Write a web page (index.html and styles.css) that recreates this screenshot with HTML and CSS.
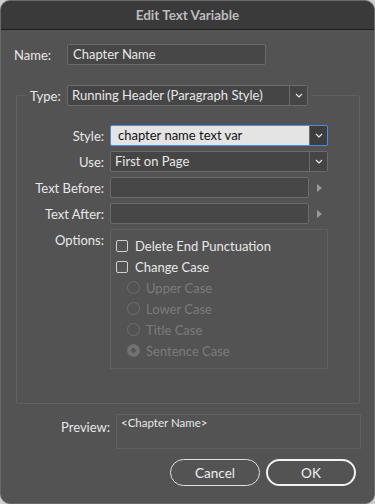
FILE: index.html
```html
<!DOCTYPE html>
<html lang="en">
  <head>
    <meta charset="UTF-8" />
    <title>Edit Text Variable</title>
    <link rel="stylesheet" href="styles.css">
  </head>
  <body>
    <div class="dialog">
      <div class="titlebar">Edit Text Variable</div>

      <div class="content">
        <div class="name_row">
          <span class="label">Name:</span>
          <div class="field name_field">Chapter Name</div>
        </div>

        <fieldset class="group">
          <legend class="type_legend">
            <span class="label">Type:</span>
            <div class="select type_select">
              <span class="select_text">Running Header (Paragraph Style)</span>
              <span class="select_arrow">
                <svg width="8" height="5" viewBox="0 0 8 5"><path d="M1 1l3 3 3-3" fill="none" stroke="#e6e6e6" stroke-width="1.2"/></svg>
              </span>
            </div>
          </legend>

          <div class="grid">
            <span class="label right">Style:</span>
            <div class="select style_select">
              <span class="select_text">chapter name text var</span>
              <span class="select_arrow">
                <svg width="8" height="5" viewBox="0 0 8 5"><path d="M1 1l3 3 3-3" fill="none" stroke="#e6e6e6" stroke-width="1.2"/></svg>
              </span>
            </div>

            <span class="label right">Use:</span>
            <div class="select">
              <span class="select_text">First on Page</span>
              <span class="select_arrow">
                <svg width="8" height="5" viewBox="0 0 8 5"><path d="M1 1l3 3 3-3" fill="none" stroke="#e6e6e6" stroke-width="1.2"/></svg>
              </span>
            </div>

            <span class="label right">Text Before:</span>
            <div class="with_menu">
              <div class="field text_field"></div>
              <svg class="menu_tri" width="5" height="8" viewBox="0 0 5 8"><path d="M0 0l5 4-5 4z" fill="#9a9a9a"/></svg>
            </div>

            <span class="label right">Text After:</span>
            <div class="with_menu">
              <div class="field text_field"></div>
              <svg class="menu_tri" width="5" height="8" viewBox="0 0 5 8"><path d="M0 0l5 4-5 4z" fill="#9a9a9a"/></svg>
            </div>

            <span class="label right options_label">Options:</span>
            <div class="options">
              <div class="check_row"><span class="checkbox"></span>Delete End Punctuation</div>
              <div class="check_row"><span class="checkbox"></span>Change Case</div>
              <div class="radio_row"><span class="radio"></span>Upper Case</div>
              <div class="radio_row"><span class="radio"></span>Lower Case</div>
              <div class="radio_row"><span class="radio"></span>Title Case</div>
              <div class="radio_row"><span class="radio checked"></span>Sentence Case</div>
            </div>
          </div>
        </fieldset>

        <div class="preview_row">
          <span class="label preview_label">Preview:</span>
          <div class="preview_box">&lt;Chapter Name&gt;</div>
        </div>

        <div class="buttons">
          <button class="btn">Cancel</button>
          <button class="btn btn_ok">OK</button>
        </div>
      </div>
    </div>
  </body>
</html>
```

FILE: styles.css
```css
html,
body {
  margin: 0;
  height: 100%;
}
body {
  background: #cfcfcf;
  font-family: "Lato", sans-serif;
  font-size: 13px;
  color: #e8e8e8;
}
.dialog {
  box-sizing: border-box;
  height: 504px;
  background: #535353;
  border: 1px solid #6a6a6a;
  border-radius: 10px;
  overflow: hidden;
}
.titlebar {
  height: 28px;
  line-height: 28px;
  background: #3a3a3a;
  border-bottom: 1px solid #1e1e1e;
  text-align: center;
  font-weight: 700;
  font-size: 13.5px;
  color: #bcbcbc;
}
.content {
  padding: 14px 0 0 13px;
}
.label {
  white-space: nowrap;
}
.right {
  text-align: right;
}
.field {
  box-sizing: border-box;
  height: 21px;
  line-height: 19px;
  border: 1px solid #6b6b6b;
  border-radius: 2px;
  background: #474747;
  padding-left: 5px;
}
.name_row {
  display: flex;
  align-items: center;
}
.name_row .label {
  width: 53px;
}
.name_field {
  width: 199px;
}

/* group box with the Type popup as its legend */
.group {
  box-sizing: border-box;
  width: 344px;
  margin: 20px 0 0 2px;
  padding: 19px 0 34px 0;
  border: 1px solid #616161;
  border-radius: 2px;
}
.type_legend {
  display: flex;
  align-items: center;
  margin-left: 9px;
  padding: 0 3px 0 4px;
}
.type_legend .label {
  width: 37px;
}
.select {
  box-sizing: border-box;
  display: flex;
  height: 21px;
  border: 1px solid #6b6b6b;
  border-radius: 2px;
  background: #454545;
}
.select_text {
  flex: 1;
  line-height: 19px;
  padding-left: 4px;
  white-space: nowrap;
  overflow: hidden;
}
.select_arrow {
  width: 17px;
  display: flex;
  align-items: center;
  justify-content: center;
  border-left: 1px solid #6b6b6b;
  background: #454545;
}
.type_select {
  width: 241px;
}
.style_select {
  border-color: #4b8fdc;
  background: #e4e4e4;
  color: #111;
}
.style_select .select_text {
  padding-left: 7px;
}
.style_select .select_arrow {
  background: #3e3e3e;
  border-left-color: #6b6b6b;
}

.grid {
  display: grid;
  grid-template-columns: 87px 218px;
  grid-template-rows: repeat(4, 21px) auto;
  column-gap: 6px;
  row-gap: 5px;
  align-items: center;
}
.with_menu {
  display: flex;
  align-items: center;
}
.text_field {
  width: 199px;
}
.menu_tri {
  margin-left: 8px;
}
.options_label {
  align-self: start;
  padding-top: 3px;
}
.options {
  box-sizing: border-box;
  align-self: start;
  height: 140px;
  border: 1px solid #606060;
  padding: 5px 0 0 5px;
}
.check_row,
.radio_row {
  display: flex;
  align-items: center;
  height: 21px;
}
.checkbox {
  box-sizing: border-box;
  width: 12px;
  height: 12px;
  border: 1px solid #d0d0d0;
  border-radius: 2px;
  margin-right: 7px;
}
.radio_row {
  color: #7b7b7b;
  padding-left: 11px;
}
.radio {
  box-sizing: border-box;
  width: 13px;
  height: 13px;
  border: 1px solid #6e6e6e;
  border-radius: 50%;
  margin-right: 6px;
}
.radio.checked {
  background: radial-gradient(circle, #555 0 2px, #717171 2.5px);
  border-color: #717171;
}

.preview_row {
  display: flex;
  margin-top: 10px;
}
.preview_label {
  width: 96px;
  text-align: right;
  padding-top: 5px;
}
.preview_box {
  box-sizing: border-box;
  width: 245px;
  height: 35px;
  margin-left: 6px;
  border: 1px solid #606060;
  padding: 1px 0 0 4px;
  font-size: 11.5px;
}
.buttons {
  display: flex;
  gap: 6px;
  margin: 10px 0 0 156px;
}
.btn {
  box-sizing: border-box;
  width: 90px;
  height: 27px;
  border: 1px solid #e0e0e0;
  border-radius: 14px;
  background: #535353;
  color: #eee;
  font-family: "Lato", sans-serif;
  font-size: 13.5px;
  padding: 0;
}
.btn_ok {
  border: 2px solid #f2f2f2;
}
```
